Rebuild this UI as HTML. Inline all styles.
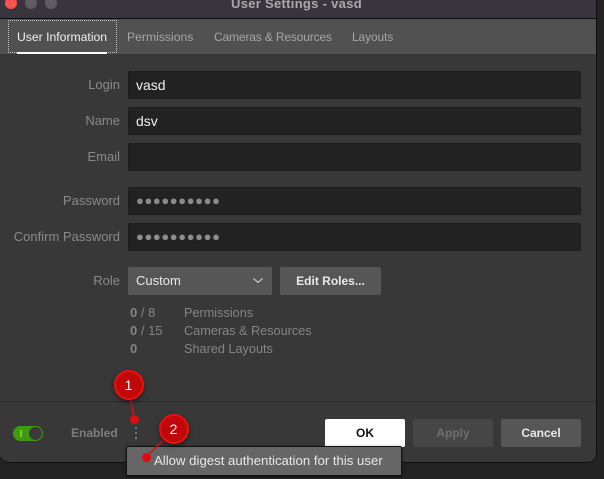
<!DOCTYPE html>
<html><head><meta charset="utf-8"><style>
html,body{margin:0;padding:0;width:604px;height:479px;overflow:hidden;background:#232323;font-family:"Liberation Sans",sans-serif}
#s{position:relative;width:604px;height:479px;overflow:hidden}
#s div{position:absolute;box-sizing:border-box}
.t{white-space:nowrap;font-size:12px;line-height:16px}
.l{color:#8a8a8a;right:484px;text-align:right;font-size:13px}
.f{left:128px;width:453px;height:28px;background:#222;border:1px solid #1c1c1c;border-radius:2px;color:#eee;font-size:14px;line-height:26px;padding-left:7px}
.p{color:#8c8c8c;font-size:13px;letter-spacing:.6px}
.tab{color:#a6a6a6;top:29px}
.btn{background:#565656;border-radius:2px;color:#e8e8e8;font-size:12px;font-weight:bold;text-align:center;line-height:28px;height:28px}
.n{color:#858585;font-size:12.7px}
.v{color:#858585;font-size:13px}
.m{background:#c00808;border:2px solid #ee1010;border-radius:50%;width:30px;height:30px;color:#fff;font-size:14px;line-height:26px;text-align:center;box-shadow:0 2px 5px rgba(0,0,0,.5)}
.d{background:#e00a14;border-radius:50%;width:9px;height:9px}
</style></head><body><div id="s">
<div style="left:0;top:0;width:597px;height:463px;background:#383838;border-right:1px solid #111;border-bottom:1px solid #111;border-bottom-left-radius:9px;border-bottom-right-radius:9px;overflow:hidden">
<div style="left:0;top:0;width:597px;height:18px;background:#38363c"></div>
<div style="left:0;top:18px;width:597px;height:1px;background:#0c0c0c"></div>
<div style="left:0;top:19px;width:597px;height:35px;background:#515151"></div>
<div style="left:0;top:401px;width:597px;height:1px;background:#282828"></div>
</div>
<div style="left:5px;top:-3px;width:12px;height:12px;border-radius:50%;background:#fb5450"></div>
<div style="left:25px;top:-3px;width:12px;height:12px;border-radius:50%;background:#5e5c62"></div>
<div style="left:45px;top:-3px;width:12px;height:12px;border-radius:50%;background:#5e5c62"></div>
<div class="t" style="left:231px;top:-4px;color:#a9a9ac;font-weight:bold;font-size:13px;letter-spacing:.3px">User Settings - vasd</div>

<div style="left:8px;top:20px;width:109px;height:33px;border:1px dotted #c8c8c8"></div>
<div class="t tab" style="left:17px;color:#f0f0f0;font-size:12.2px">User Information</div>
<div style="left:17px;top:52px;width:90px;height:2px;background:#fff"></div>
<div class="t tab" style="left:127px;font-size:12.2px">Permissions</div>
<div class="t tab" style="left:214px;font-size:12px;letter-spacing:-.15px">Cameras &amp; Resources</div>
<div class="t tab" style="left:352px;font-size:11.8px">Layouts</div>

<div class="t l" style="top:77px">Login</div>
<div class="t l" style="top:113px">Name</div>
<div class="t l" style="top:149px">Email</div>
<div class="t l" style="top:193px">Password</div>
<div class="t l" style="top:229px">Confirm Password</div>
<div class="t l" style="top:273px">Role</div>

<div class="f" style="top:71px">vasd</div>
<div class="f" style="top:107px">dsv</div>
<div class="f" style="top:143px"></div>
<div class="f p" style="top:187px">●●●●●●●●●●</div>
<div class="f p" style="top:223px">●●●●●●●●●●</div>

<div class="btn" style="left:128px;top:267px;width:144px;text-align:left;padding-left:8px;font-weight:normal;font-size:13px">Custom</div>
<svg style="position:absolute;left:252px;top:276px" width="12" height="9"><path d="M1.5 2.5 L6 6.5 L10.5 2.5" fill="none" stroke="#e0e0e0" stroke-width="1"/></svg>
<div class="btn" style="left:280px;top:267px;width:101px">Edit Roles...</div>

<div class="t v" style="left:130px;top:305px"><b>0</b> / 8</div>
<div class="t n" style="left:184px;top:305px">Permissions</div>
<div class="t v" style="left:130px;top:323px"><b>0</b> / 15</div>
<div class="t n" style="left:184px;top:323px">Cameras &amp; Resources</div>
<div class="t v" style="left:130px;top:341px"><b>0</b></div>
<div class="t n" style="left:184px;top:341px">Shared Layouts</div>

<div style="left:13px;top:426px;width:30px;height:15px;border-radius:8px;background:#3f9a12"></div>
<div style="left:20px;top:430px;width:2px;height:7px;background:#72d020"></div>
<div style="left:29px;top:427px;width:13px;height:13px;border-radius:50%;background:#3a3a3a"></div>
<div class="t" style="left:71px;top:425px;color:#7e7e7e;font-weight:bold">Enabled</div>
<div style="left:135px;top:427px;width:2px;height:2px;background:#7a7a7a"></div>
<div style="left:135px;top:432px;width:2px;height:2px;background:#7a7a7a"></div>
<div style="left:135px;top:437px;width:2px;height:2px;background:#7a7a7a"></div>

<div class="btn" style="left:325px;top:419px;width:80px;background:#fff;color:#111">OK</div>
<div class="btn" style="left:413px;top:419px;width:80px;background:#464646;color:#6f6f6f">Apply</div>
<div class="btn" style="left:501px;top:419px;width:80px">Cancel</div>

<div class="t" style="left:126px;top:446px;width:276px;height:30px;background:#666;border:1px solid #111;border-radius:2px;color:#e8e8e8;font-size:13.2px;line-height:28px;padding-left:27px;box-shadow:0 1px 3px rgba(0,0,0,.5)">Allow digest authentication for this user</div>

<svg style="position:absolute;left:0;top:0" width="604" height="479"><path d="M130 398 L134.3 419 M165 438 L146 457.5" stroke="#e00a14" stroke-width="1.5" fill="none"/></svg>
<div class="m" style="left:113.5px;top:370px">1</div>
<div class="m" style="left:158.5px;top:413.5px">2</div>
<div class="d" style="left:130px;top:415px"></div>
<div class="d" style="left:141.5px;top:453px"></div>
</div></body></html>
